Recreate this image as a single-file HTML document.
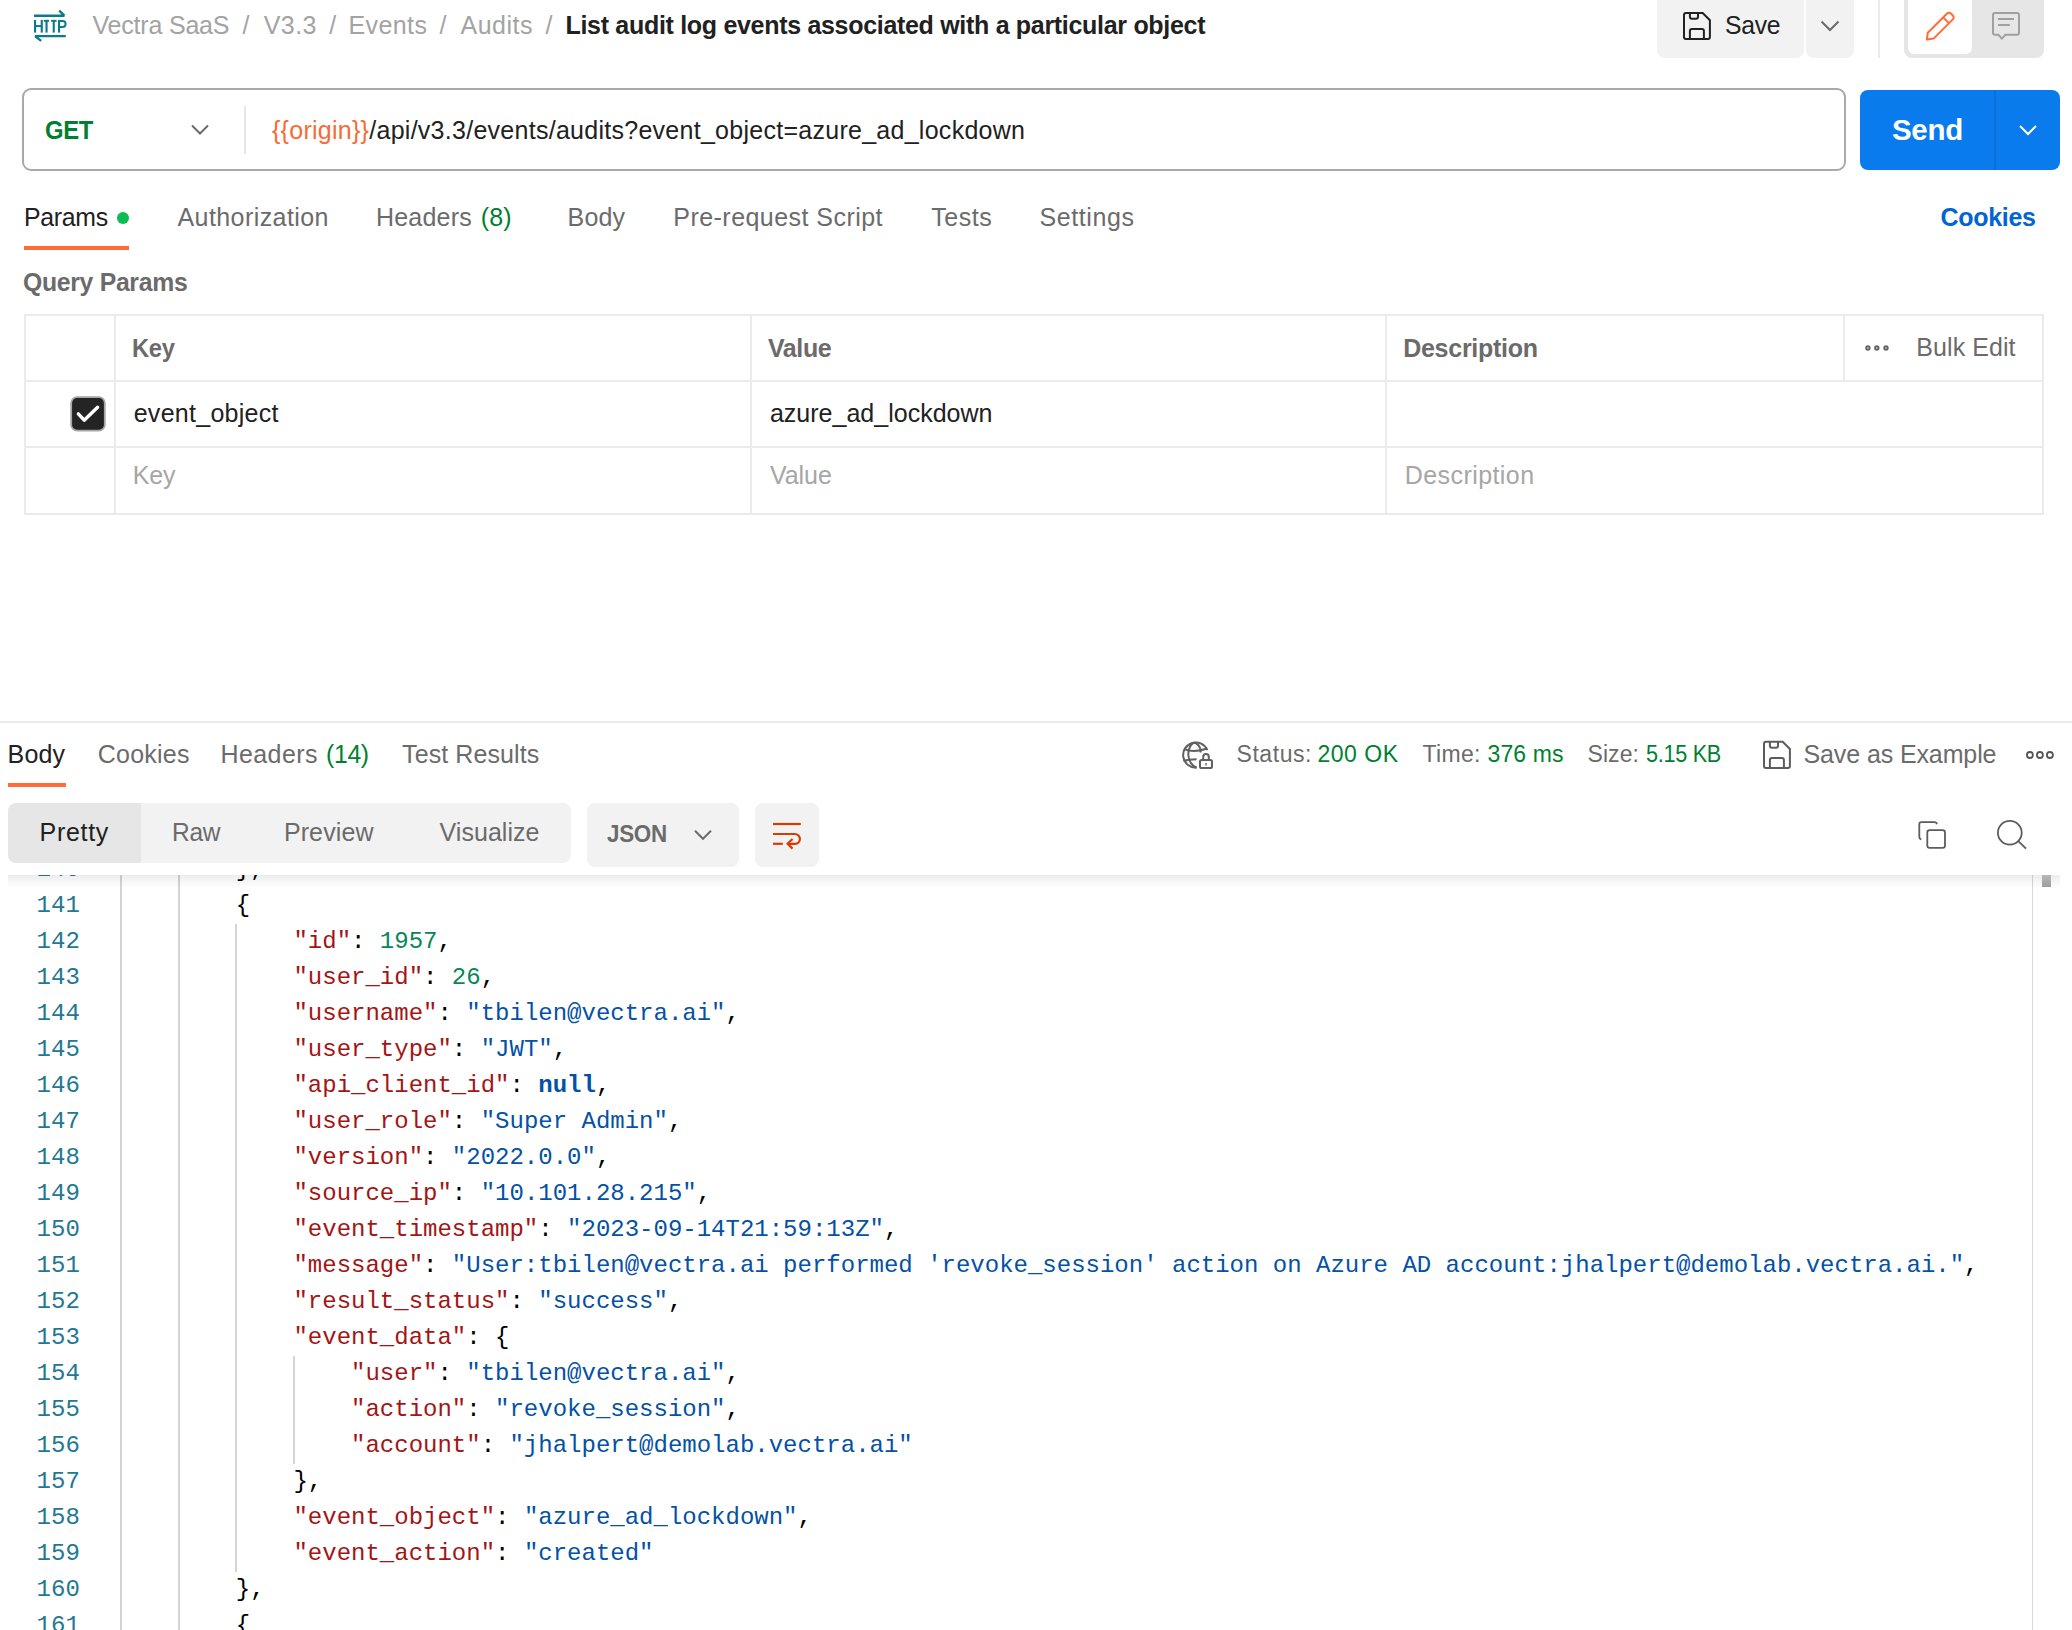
<!DOCTYPE html>
<html><head><meta charset="utf-8">
<style>
html,body{margin:0;padding:0;background:#fff;width:2072px;height:1630px;overflow:hidden;position:relative;font-family:"Liberation Sans",sans-serif;}
.t{position:absolute;white-space:pre;font-family:"Liberation Sans",sans-serif;}
.r{position:absolute;}
svg{position:absolute;overflow:visible;}
#codeclip{position:absolute;left:8px;top:875px;width:2052px;height:755px;overflow:hidden;}
#codein{position:absolute;left:-8px;top:-875px;width:2072px;height:1630px;}
.cl{position:absolute;left:120.6px;white-space:pre;font-family:"Liberation Mono",monospace;font-size:24px;line-height:36px;color:#000;}
.ln{position:absolute;left:0;width:79.8px;text-align:right;white-space:pre;font-family:"Liberation Mono",monospace;font-size:24px;line-height:36px;color:#237893;}
.k{color:#a31515}.s{color:#0451a5}.n{color:#098658}.nl{color:#0451a5;font-weight:700}
.g{position:absolute;width:2px;background:#d4d4d4;}
</style></head><body>

<!-- HEADER -->
<svg style="left:0;top:0" width="2072" height="60" viewBox="0 0 2072 60">
  <!-- HTTP icon -->
  <g fill="none" stroke="#0b7b8b" stroke-width="2.4" stroke-linecap="butt">
    <path d="M34 15.7 H64.5 M59.2 10.7 L64.5 15.7"/>
    <path d="M65.8 36.1 H35 M41.2 40.9 L35 36.1"/>
  </g>
  <g fill="#0b7b8b">
    <rect x="34" y="19.9" width="2.1" height="12.7"/>
    <rect x="40.7" y="19.9" width="2.1" height="12.7"/>
    <rect x="34" y="25.1" width="8" height="2"/>
    <rect x="43.8" y="19.9" width="5.3" height="1.9"/>
    <rect x="45.5" y="19.9" width="2.1" height="12.7"/>
    <rect x="51.1" y="19.9" width="5.5" height="1.9"/>
    <rect x="52.7" y="19.9" width="2.1" height="12.7"/>
    <rect x="58" y="19.9" width="2.1" height="12.7"/>
  </g>
  <path d="M59 20.9 H62.5 Q65.6 20.9 65.6 24 Q65.6 27.1 62.5 27.1 H59" fill="none" stroke="#0b7b8b" stroke-width="2"/>
</svg>

<div class="r" style="left:1657px;top:-10px;width:146.5px;height:67.7px;background:#f2f2f2;border-radius:8px"></div>
<div class="r" style="left:1806px;top:-10px;width:48px;height:67.7px;background:#f2f2f2;border-radius:8px"></div>
<div class="r" style="left:1878px;top:0;width:2px;height:57.7px;background:#ebebeb"></div>
<div class="r" style="left:1904px;top:-10px;width:140px;height:67.7px;background:#e6e6e6;border-radius:8px"></div>
<div class="r" style="left:1908px;top:-10px;width:64px;height:64px;background:#fff;border-radius:6px"></div>

<svg style="left:0;top:0" width="2072" height="60" viewBox="0 0 2072 60">
  <!-- save icon -->
  <path d="M1686 13.05 H1702.7 L1709.9 20.2 V36.9 Q1709.9 38.9 1707.9 38.9 H1686 Q1684 38.9 1684 36.9 V15.05 Q1684 13.05 1686 13.05 Z" fill="none" stroke="#212121" stroke-width="2"/>
  <path d="M1689.9 13.05 V16.7 Q1689.9 18.7 1691.9 18.7 H1696 Q1698 18.7 1698 16.7 V13.05" fill="none" stroke="#212121" stroke-width="2"/>
  <path d="M1689.9 38.9 V31 Q1689.9 29 1691.9 29 H1701.9 Q1703.9 29 1703.9 31 V38.9" fill="none" stroke="#212121" stroke-width="2"/>
  <!-- save chevron -->
  <path d="M1821.5 21.5 L1830 30 L1838.5 21.5" fill="none" stroke="#6b6b6b" stroke-width="2"/>
  <!-- pencil -->
  <g fill="none" stroke="#ff6c37" stroke-width="2" stroke-linejoin="round">
    <path d="M1927.8 32.8 L1946.8 13.8 Q1949 11.6 1951.2 13.8 L1952.6 15.2 Q1954.8 17.4 1952.6 19.6 L1933.6 38.6 L1926.8 39.6 Z"/>
    <path d="M1943.4 17.6 L1948.8 23"/>
  </g>
  <!-- comment -->
  <g fill="none" stroke="#a0a0a0" stroke-width="2">
    <path d="M1995 13.1 H2017 Q2019 13.1 2019 15.1 V32.8 Q2019 34.8 2017 34.8 H2005.4 L2001.8 38.6 L1998.4 34.8 H1995 Q1993 34.8 1993 32.8 V15.1 Q1993 13.1 1995 13.1 Z"/>
    <path d="M1998 19 H2014 M1998 24.9 H2009.8"/>
  </g>
</svg>

<!-- URL BAR -->
<div class="r" style="left:22px;top:88px;width:1820px;height:79px;border:2px solid #a9a9a9;border-radius:9px"></div>
<div class="r" style="left:243.6px;top:106px;width:2px;height:48px;background:#e6e6e6"></div>
<div class="r" style="left:1860px;top:90px;width:200px;height:80px;background:#097bed;border-radius:8px"></div>
<div class="r" style="left:1994px;top:90px;width:2px;height:80px;background:#0a6fd6"></div>
<svg style="left:0;top:0" width="2072" height="180" viewBox="0 0 2072 180">
  <path d="M192 125.5 L200 133.5 L208 125.5" fill="none" stroke="#6b6b6b" stroke-width="2"/>
  <path d="M2020 126 L2028 134 L2036 126" fill="none" stroke="#fff" stroke-width="2"/>
</svg>
<div class='t' style='left:272px;top:114.83px;font-size:25px;line-height:31px;color:#212121;letter-spacing:0.270px'><span style='color:#fb6a36'>{{origin}}</span>/api/v3.3/events/audits?event_object=azure_ad_lockdown</div>

<!-- TABS -->
<div class="r" style="left:116.7px;top:211.8px;width:12px;height:12px;border-radius:50%;background:#0cbb52"></div>
<div class="r" style="left:24px;top:246px;width:105px;height:4px;background:#ff6c37"></div>

<!-- TABLE -->
<div class="r" style="left:24px;top:314px;width:2016px;height:197px;border:2px solid #ebebeb"></div>
<div class="r" style="left:114px;top:314px;width:2px;height:199px;background:#ebebeb"></div>
<div class="r" style="left:749.7px;top:314px;width:2px;height:199px;background:#ebebeb"></div>
<div class="r" style="left:1384.8px;top:314px;width:2px;height:199px;background:#ebebeb"></div>
<div class="r" style="left:1843px;top:314px;width:2px;height:67px;background:#ebebeb"></div>
<div class="r" style="left:24px;top:380px;width:2018px;height:2px;background:#ebebeb"></div>
<div class="r" style="left:24px;top:446px;width:2018px;height:2px;background:#ebebeb"></div>
<svg style="left:0;top:0" width="2072" height="520" viewBox="0 0 2072 520">
  <rect x="71.2" y="397.1" width="33.6" height="33.6" rx="6" fill="#242424" stroke="#a6a6a6" stroke-width="1.8"/>
  <path d="M78.3 413.9 L84.2 420.2 L97.6 407.3" fill="none" stroke="#fff" stroke-width="3.4" stroke-linecap="round" stroke-linejoin="round"/>
  <g fill="none" stroke="#666" stroke-width="2">
    <circle cx="1867.9" cy="348" r="1.7"/><circle cx="1876.8" cy="348" r="1.7"/><circle cx="1886" cy="348" r="1.7"/>
  </g>
</svg>

<!-- RESPONSE -->
<div class="r" style="left:0;top:721px;width:2072px;height:2px;background:#ebebeb"></div>
<div class="r" style="left:8px;top:783px;width:58px;height:3.6px;background:#ff6c37"></div>
<div class="r" style="left:8px;top:803.2px;width:563px;height:59.6px;background:#f2f2f2;border-radius:8px"></div>
<div class="r" style="left:8px;top:803.2px;width:133px;height:59.6px;background:#e6e6e6;border-radius:8px 0 0 8px"></div>
<div class="r" style="left:587px;top:803px;width:152px;height:64px;background:#f2f2f2;border-radius:8px"></div>
<div class="r" style="left:755px;top:803px;width:63.5px;height:64px;background:#f2f2f2;border-radius:8px"></div>
<svg style="left:0;top:700px" width="2072" height="180" viewBox="0 700 2072 180">
  <!-- globe lock -->
  <g fill="none" stroke="#616161" stroke-width="2">
    <path d="M1207.4 750.2 A12.6 12.6 0 1 0 1196.6 767.6"/>
    <path d="M1194.4 742.4 C1186 747 1186 763 1196.6 767.6"/>
    <path d="M1194.4 742.4 C1199.5 745 1201 749 1200.6 752.5"/>
    <path d="M1183.8 748.8 C1189 751.5 1198 751.8 1206.3 748.8"/>
    <path d="M1183.5 761 C1186.5 760 1189 759.3 1196.6 759.3"/>
    <rect x="1200" y="760" width="12" height="8" rx="1.6"/>
    <path d="M1203.2 760 V757 Q1203.2 754 1206 754 Q1208.8 754 1208.8 757 V760"/>
  </g>
  <path d="M1206 763 V765.5" stroke="#616161" stroke-width="1.4"/>
  <!-- save as example icon -->
  <g fill="none" stroke="#5c5c5c" stroke-width="2">
    <path d="M1766 741.85 H1782.7 L1789.9 749 V765.9 Q1789.9 767.9 1787.9 767.9 H1766 Q1764 767.9 1764 765.9 V743.85 Q1764 741.85 1766 741.85 Z"/>
    <path d="M1769.9 741.85 V745.7 Q1769.9 747.7 1771.9 747.7 H1776 Q1778 747.7 1778 745.7 V741.85"/>
    <path d="M1769.9 767.9 V760 Q1769.9 758 1771.9 758 H1781.9 Q1783.9 758 1783.9 760 V767.9"/>
  </g>
  <!-- ellipsis -->
  <g fill="none" stroke="#555" stroke-width="1.8">
    <circle cx="2029.9" cy="755" r="3"/><circle cx="2039.9" cy="755" r="3"/><circle cx="2049.9" cy="755" r="3"/>
  </g>
  <!-- JSON chevron -->
  <path d="M695 830.8 L703 838.8 L711 830.8" fill="none" stroke="#6b6b6b" stroke-width="2"/>
  <!-- wrap icon -->
  <g fill="none" stroke="#d63b00" stroke-width="2.2">
    <path d="M773 824 H800.8"/>
    <path d="M773 834 H795 A4.9 4.9 0 0 1 795 843.8 H788"/>
    <path d="M773 843.8 H782.8"/>
    <path d="M792.5 839 L787.6 843.8 L792.5 848.6"/>
  </g>
  <!-- copy -->
  <g fill="none" stroke="#5c5c5c" stroke-width="1.8">
    <path d="M1936.9 824.2 Q1936.5 822.2 1934.5 822.2 H1921.3 Q1919.3 822.2 1919.3 824.2 V837 Q1919.3 839 1921.3 839.6"/>
    <rect x="1927.3" y="830.2" width="17.7" height="17.6" rx="2.4"/>
  </g>
  <!-- search -->
  <g fill="none" stroke="#5c5c5c" stroke-width="1.8">
    <circle cx="2009.8" cy="832.7" r="11.9"/>
    <path d="M2018.3 841.2 L2026 848.7"/>
  </g>
</svg>

<div class='t' id='t0' style='left:92.5px;top:9.83px;font-size:25px;line-height:31px;color:#a3a3a3;letter-spacing:-0.198px;'>Vectra SaaS</div>
<div class='t' id='t1' style='left:242.5px;top:9.83px;font-size:25px;line-height:31px;color:#a3a3a3;'>/</div>
<div class='t' id='t2' style='left:263.7px;top:9.83px;font-size:25px;line-height:31px;color:#a3a3a3;letter-spacing:0.454px;'>V3.3</div>
<div class='t' id='t3' style='left:329.3px;top:9.83px;font-size:25px;line-height:31px;color:#a3a3a3;'>/</div>
<div class='t' id='t4' style='left:348.5px;top:9.83px;font-size:25px;line-height:31px;color:#a3a3a3;letter-spacing:0.392px;'>Events</div>
<div class='t' id='t5' style='left:439.5px;top:9.83px;font-size:25px;line-height:31px;color:#a3a3a3;'>/</div>
<div class='t' id='t6' style='left:460.5px;top:9.83px;font-size:25px;line-height:31px;color:#a3a3a3;letter-spacing:0.503px;'>Audits</div>
<div class='t' id='t7' style='left:545.5px;top:9.83px;font-size:25px;line-height:31px;color:#a3a3a3;'>/</div>
<div class='t' id='t8' style='left:565.5px;top:9.83px;font-size:25px;line-height:31px;color:#212121;font-weight:700;letter-spacing:-0.306px;'>List audit log events associated with a particular object</div>
<div class='t' id='t9' style='left:1724.5px;top:9.83px;font-size:25px;line-height:31px;color:#212121;letter-spacing:-0.300px;transform:scaleX(0.9893);transform-origin:0 0;'>Save</div>
<div class='t' id='t10' style='left:44.9px;top:114.83px;font-size:25px;line-height:31px;color:#007f31;font-weight:700;letter-spacing:-0.300px;transform:scaleX(0.9532);transform-origin:0 0;'>GET</div>
<div class='t' id='t12' style='left:1891.5px;top:110.60px;font-size:30px;line-height:38px;color:#ffffff;font-weight:700;letter-spacing:-0.300px;transform:scaleX(0.9822);transform-origin:0 0;'>Send</div>
<div class='t' id='t13' style='left:23.5px;top:201.83px;font-size:25px;line-height:31px;color:#212121;letter-spacing:-0.300px;transform:scaleX(0.9935);transform-origin:0 0;'>Params</div>
<div class='t' id='t14' style='left:177.5px;top:201.83px;font-size:25px;line-height:31px;color:#6b6b6b;letter-spacing:0.422px;'>Authorization</div>
<div class='t' id='t15' style='left:375.9px;top:201.83px;font-size:25px;line-height:31px;color:#6b6b6b;letter-spacing:0.217px;'>Headers</div>
<div class='t' id='t16' style='left:480.7px;top:201.83px;font-size:25px;line-height:31px;color:#007f31;letter-spacing:0.119px;'>(8)</div>
<div class='t' id='t17' style='left:567.5px;top:201.83px;font-size:25px;line-height:31px;color:#6b6b6b;letter-spacing:0.205px;'>Body</div>
<div class='t' id='t18' style='left:673.3px;top:201.83px;font-size:25px;line-height:31px;color:#6b6b6b;letter-spacing:0.455px;'>Pre-request Script</div>
<div class='t' id='t19' style='left:931.3px;top:201.83px;font-size:25px;line-height:31px;color:#6b6b6b;letter-spacing:0.510px;'>Tests</div>
<div class='t' id='t20' style='left:1039.5px;top:201.83px;font-size:25px;line-height:31px;color:#6b6b6b;letter-spacing:0.579px;'>Settings</div>
<div class='t' id='t21' style='left:1940.5px;top:201.83px;font-size:25px;line-height:31px;color:#0265d2;font-weight:700;letter-spacing:-0.300px;transform:scaleX(1.0000);transform-origin:0 0;'>Cookies</div>
<div class='t' id='t22' style='left:23.3px;top:267.33px;font-size:25px;line-height:31px;color:#6b6b6b;font-weight:700;letter-spacing:-0.300px;transform:scaleX(0.9906);transform-origin:0 0;'>Query Params</div>
<div class='t' id='t23' style='left:131.9px;top:333.03px;font-size:25px;line-height:31px;color:#6b6b6b;font-weight:700;letter-spacing:-0.300px;transform:scaleX(0.9503);transform-origin:0 0;'>Key</div>
<div class='t' id='t24' style='left:767.9px;top:333.03px;font-size:25px;line-height:31px;color:#6b6b6b;font-weight:700;letter-spacing:-0.382px;'>Value</div>
<div class='t' id='t25' style='left:1403.2px;top:333.03px;font-size:25px;line-height:31px;color:#6b6b6b;font-weight:700;letter-spacing:-0.263px;'>Description</div>
<div class='t' id='t26' style='left:1916.3px;top:332.03px;font-size:25px;line-height:31px;color:#6b6b6b;letter-spacing:0.066px;'>Bulk Edit</div>
<div class='t' id='t27' style='left:133.7px;top:397.93px;font-size:25px;line-height:31px;color:#212121;letter-spacing:0.274px;'>event_object</div>
<div class='t' id='t28' style='left:769.9px;top:397.93px;font-size:25px;line-height:31px;color:#212121;letter-spacing:0.013px;'>azure_ad_lockdown</div>
<div class='t' id='t29' style='left:132.7px;top:460.43px;font-size:25px;line-height:31px;color:#a6a6a6;letter-spacing:-0.147px;'>Key</div>
<div class='t' id='t30' style='left:769.9px;top:460.43px;font-size:25px;line-height:31px;color:#a6a6a6;letter-spacing:-0.023px;'>Value</div>
<div class='t' id='t31' style='left:1404.7px;top:460.43px;font-size:25px;line-height:31px;color:#a6a6a6;letter-spacing:0.434px;'>Description</div>
<div class='t' id='t32' style='left:7.5px;top:738.83px;font-size:25px;line-height:31px;color:#212121;letter-spacing:0.205px;'>Body</div>
<div class='t' id='t33' style='left:97.7px;top:738.83px;font-size:25px;line-height:31px;color:#6b6b6b;letter-spacing:0.245px;'>Cookies</div>
<div class='t' id='t34' style='left:220.5px;top:738.83px;font-size:25px;line-height:31px;color:#6b6b6b;letter-spacing:0.417px;'>Headers</div>
<div class='t' id='t35' style='left:326.1px;top:738.83px;font-size:25px;line-height:31px;color:#007f31;letter-spacing:-0.300px;transform:scaleX(0.9889);transform-origin:0 0;'>(14)</div>
<div class='t' id='t36' style='left:402.1px;top:738.83px;font-size:25px;line-height:31px;color:#6b6b6b;letter-spacing:0.093px;'>Test Results</div>
<div class='t' id='t37' style='left:1236.5px;top:740.33px;font-size:23px;line-height:29px;color:#6b6b6b;letter-spacing:0.565px;'>Status:</div>
<div class='t' id='t38' style='left:1317.5px;top:740.33px;font-size:23px;line-height:29px;color:#007f31;letter-spacing:0.520px;'>200 OK</div>
<div class='t' id='t39' style='left:1422.5px;top:740.13px;font-size:23px;line-height:29px;color:#6b6b6b;letter-spacing:0.336px;'>Time:</div>
<div class='t' id='t40' style='left:1487.5px;top:740.13px;font-size:23px;line-height:29px;color:#007f31;letter-spacing:0.113px;'>376 ms</div>
<div class='t' id='t41' style='left:1587.5px;top:740.13px;font-size:23px;line-height:29px;color:#6b6b6b;letter-spacing:0.065px;'>Size:</div>
<div class='t' id='t42' style='left:1645.9px;top:740.13px;font-size:23px;line-height:29px;color:#007f31;letter-spacing:-0.300px;transform:scaleX(0.9407);transform-origin:0 0;'>5.15 KB</div>
<div class='t' id='t43' style='left:1803.5px;top:738.83px;font-size:25px;line-height:31px;color:#6b6b6b;letter-spacing:-0.110px;'>Save as Example</div>
<div class='t' id='t44' style='left:39.5px;top:817.13px;font-size:25px;line-height:31px;color:#212121;letter-spacing:0.701px;'>Pretty</div>
<div class='t' id='t45' style='left:171.5px;top:817.13px;font-size:25px;line-height:31px;color:#6b6b6b;letter-spacing:-0.300px;transform:scaleX(0.9809);transform-origin:0 0;'>Raw</div>
<div class='t' id='t46' style='left:283.9px;top:817.13px;font-size:25px;line-height:31px;color:#6b6b6b;letter-spacing:0.113px;'>Preview</div>
<div class='t' id='t47' style='left:439.5px;top:817.13px;font-size:25px;line-height:31px;color:#6b6b6b;letter-spacing:0.049px;'>Visualize</div>
<div class='t' id='t48' style='left:607.1px;top:820.33px;font-size:23px;line-height:29px;color:#6b6b6b;font-weight:700;letter-spacing:-0.300px;transform:scaleX(0.9741);transform-origin:0 0;'>JSON</div>

<!-- CODE -->
<div id="codeclip"><div id="codein">
<div class='g' style='left:119.6px;top:875.0px;height:755.0px'></div>
<div class='g' style='left:178.0px;top:875.0px;height:755.0px'></div>
<div class='g' style='left:234.8px;top:924.0px;height:648.0px'></div>
<div class='g' style='left:293.0px;top:1356.0px;height:108.0px'></div>
<div class='ln' style='top:852.01px'>140</div>
<div class='ln' style='top:888.01px'>141</div>
<div class='ln' style='top:924.01px'>142</div>
<div class='ln' style='top:960.01px'>143</div>
<div class='ln' style='top:996.01px'>144</div>
<div class='ln' style='top:1032.01px'>145</div>
<div class='ln' style='top:1068.01px'>146</div>
<div class='ln' style='top:1104.01px'>147</div>
<div class='ln' style='top:1140.01px'>148</div>
<div class='ln' style='top:1176.01px'>149</div>
<div class='ln' style='top:1212.01px'>150</div>
<div class='ln' style='top:1248.01px'>151</div>
<div class='ln' style='top:1284.01px'>152</div>
<div class='ln' style='top:1320.01px'>153</div>
<div class='ln' style='top:1356.01px'>154</div>
<div class='ln' style='top:1392.01px'>155</div>
<div class='ln' style='top:1428.01px'>156</div>
<div class='ln' style='top:1464.01px'>157</div>
<div class='ln' style='top:1500.01px'>158</div>
<div class='ln' style='top:1536.01px'>159</div>
<div class='ln' style='top:1572.01px'>160</div>
<div class='ln' style='top:1608.01px'>161</div>
<div class='cl' style='top:852.01px'>        },</div>
<div class='cl' style='top:888.01px'>        {</div>
<div class='cl' style='top:924.01px'>            <span class='k'>&quot;id&quot;</span>: <span class='n'>1957</span>,</div>
<div class='cl' style='top:960.01px'>            <span class='k'>&quot;user_id&quot;</span>: <span class='n'>26</span>,</div>
<div class='cl' style='top:996.01px'>            <span class='k'>&quot;username&quot;</span>: <span class='s'>&quot;tbilen@vectra.ai&quot;</span>,</div>
<div class='cl' style='top:1032.01px'>            <span class='k'>&quot;user_type&quot;</span>: <span class='s'>&quot;JWT&quot;</span>,</div>
<div class='cl' style='top:1068.01px'>            <span class='k'>&quot;api_client_id&quot;</span>: <span class='nl'>null</span>,</div>
<div class='cl' style='top:1104.01px'>            <span class='k'>&quot;user_role&quot;</span>: <span class='s'>&quot;Super Admin&quot;</span>,</div>
<div class='cl' style='top:1140.01px'>            <span class='k'>&quot;version&quot;</span>: <span class='s'>&quot;2022.0.0&quot;</span>,</div>
<div class='cl' style='top:1176.01px'>            <span class='k'>&quot;source_ip&quot;</span>: <span class='s'>&quot;10.101.28.215&quot;</span>,</div>
<div class='cl' style='top:1212.01px'>            <span class='k'>&quot;event_timestamp&quot;</span>: <span class='s'>&quot;2023-09-14T21:59:13Z&quot;</span>,</div>
<div class='cl' style='top:1248.01px'>            <span class='k'>&quot;message&quot;</span>: <span class='s'>&quot;User:tbilen@vectra.ai performed &#x27;revoke_session&#x27; action on Azure AD account:jhalpert@demolab.vectra.ai.&quot;</span>,</div>
<div class='cl' style='top:1284.01px'>            <span class='k'>&quot;result_status&quot;</span>: <span class='s'>&quot;success&quot;</span>,</div>
<div class='cl' style='top:1320.01px'>            <span class='k'>&quot;event_data&quot;</span>: {</div>
<div class='cl' style='top:1356.01px'>                <span class='k'>&quot;user&quot;</span>: <span class='s'>&quot;tbilen@vectra.ai&quot;</span>,</div>
<div class='cl' style='top:1392.01px'>                <span class='k'>&quot;action&quot;</span>: <span class='s'>&quot;revoke_session&quot;</span>,</div>
<div class='cl' style='top:1428.01px'>                <span class='k'>&quot;account&quot;</span>: <span class='s'>&quot;jhalpert@demolab.vectra.ai&quot;</span></div>
<div class='cl' style='top:1464.01px'>            },</div>
<div class='cl' style='top:1500.01px'>            <span class='k'>&quot;event_object&quot;</span>: <span class='s'>&quot;azure_ad_lockdown&quot;</span>,</div>
<div class='cl' style='top:1536.01px'>            <span class='k'>&quot;event_action&quot;</span>: <span class='s'>&quot;created&quot;</span></div>
<div class='cl' style='top:1572.01px'>        },</div>
<div class='cl' style='top:1608.01px'>        {</div>
<div class="r" style="left:2031.6px;top:875px;width:1.4px;height:755px;background:#d9d9d9"></div>
<div class="r" style="left:8px;top:875px;width:2052px;height:13px;background:linear-gradient(rgba(0,0,0,0.075),rgba(0,0,0,0))"></div>
<div class="r" style="left:2042px;top:875px;width:9px;height:12px;background:linear-gradient(#b8b8b8,#9e9e9e)"></div>
</div></div>

</body></html>
